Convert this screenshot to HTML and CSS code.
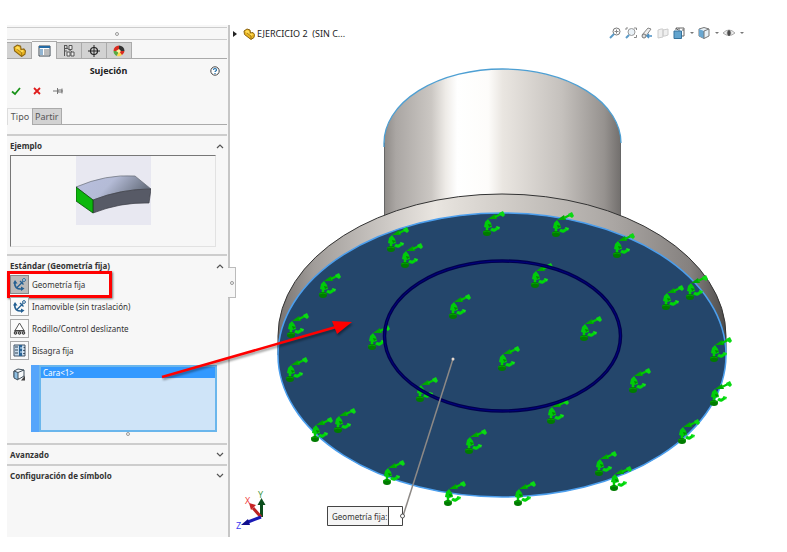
FILE: index.html
```html
<!DOCTYPE html>
<html lang="es">
<head>
  <meta charset="UTF-8">
  <meta name="viewport" content="width=device-width, initial-scale=1.0">
  <title>Sujeción</title>
  <link rel="stylesheet" href="styles.css">
</head>
<body>

<!-- shared icons -->
<svg class="defs" width="0" height="0">
  <symbol id="part" viewBox="0 0 12 12">
    <path d="M1 3 4 1l3 1 .5 3L10 4.500l1.500 2-.5 3L8 11.500 1.500 6.500z" fill="#e9b421" stroke="#8b6410"/>
    <path d="M2 3.500 4 2l2 1 .5 3L9 5.500l1 1-2 1.500-4-3z" fill="#ffdc58"/>
    <path d="M4 5l4 3v3" fill="none" stroke="#8b6410" stroke-width=".7"/>
  </symbol>
  <symbol id="anchor" viewBox="0 0 15 15">
    <path d="M3 5C2 10 5 12.500 10 12" fill="none" stroke="#235f92" stroke-width="1.600"/>
    <path d="M1 6.500 3 3l2.500 3.500zM9 9.500l3.500 2L9 14z" fill="#235f92"/>
    <path d="M4.500 11 11 4.500M8 4l3.500 3.500" stroke="#235f92" stroke-width="1.300"/>
    <circle cx="12" cy="3" r="1.400" fill="#fff" stroke="#235f92"/>
  </symbol>
  <symbol id="chev" viewBox="0 0 8 8">
    <path d="M1 6 4 3l3 3" fill="none" stroke="#555" stroke-width="1.200"/>
  </symbol>
</svg>

<div class="app">

  <aside class="panel">
    <div class="grip"><i class="dot"></i></div>

    <nav class="tabs">
      <button class="tab" aria-label="Árbol"><svg width="13" height="13"><use href="#part"/></svg></button>
      <button class="tab active" aria-label="Propiedades">
        <svg width="13" height="12" viewBox="0 0 13 12"><path d="M1 1h11v10H1z" fill="#fff" stroke="#3a4650"/><path d="M1 2h11" stroke="#256ba5" stroke-width="2"/><path d="M2 5h3M2 7h3M2 9h3" stroke="#256ba5"/><path d="M6 5h5M6 7h5M6 9h5" stroke="#777"/></svg>
      </button>
      <button class="tab" aria-label="Configuraciones">
        <svg width="12" height="13" viewBox="0 0 12 13"><path d="M1.500 1v11M1 1.500h3v3H2M4 4l5 4M2 7h2" fill="none" stroke="#555"/><path d="M6 1.500h3v4H6zM4 8h3v4H4zM8 8h3v4H8z" fill="#eee" stroke="#555"/></svg>
      </button>
      <button class="tab" aria-label="Cotas">
        <svg width="12" height="12" viewBox="0 0 12 12"><circle cx="6" cy="6" r="3.500" fill="none" stroke="#222" stroke-width="1.200"/><path d="M6 0v12M0 6h12" stroke="#222"/></svg>
      </button>
      <button class="tab" aria-label="Aspecto">
        <svg width="12" height="12" viewBox="0 0 12 12"><path d="M6 6V.5A5.500 5.500 0 0 0 .5 6z" fill="#d92c20"/><path d="M6 6V.5A5.500 5.500 0 0 1 11.500 6z" fill="#333"/><path d="M6 6H.5A5.500 5.500 0 0 0 4 11z" fill="#59a842"/><path d="M6 6 4 11a5.500 5.500 0 0 0 5-1z" fill="#ffd84a"/><path d="M6 6l3 4a5.500 5.500 0 0 0 2.500-4z" fill="#d92c20"/><path d="M3 6l3-2 2 2-2 2z" fill="#fff0a8"/></svg>
      </button>
    </nav>

    <header class="title">
      <h1>Sujeción</h1>
      <button class="help" aria-label="Ayuda">
        <svg width="10" height="10" viewBox="0 0 10 10"><circle cx="5" cy="5" r="4.200" fill="#fff" stroke="#444"/><path d="M3.500 4c0-2 3-2 3 0 0 1-1.500 1-1.500 2M5 7v1" fill="none" stroke="#1b6ba8" stroke-width="1.200"/></svg>
      </button>
    </header>

    <div class="actions">
      <button aria-label="Aceptar"><svg width="10" height="10" viewBox="0 0 10 10"><path d="M1 5.500 4 8l5-6" fill="none" stroke="#189218" stroke-width="1.800"/></svg></button>
      <button aria-label="Cancelar"><svg width="10" height="10" viewBox="0 0 10 10"><path d="M2 2l6 6M8 2 2 8" stroke="#df1d1d" stroke-width="1.800"/></svg></button>
      <button aria-label="Fijar"><svg width="10" height="10" viewBox="0 0 10 10"><path d="M0 5h4M4.500 2v6M5 4h4v2H5zM9 2.500v5" fill="none" stroke="#777"/></svg></button>
    </div>

    <div class="subtabs">
      <button class="subtab active">Tipo</button>
      <button class="subtab">Partir</button>
    </div>

    <section class="group">
      <h2><button>Ejemplo <svg width="8" height="8"><use href="#chev"/></svg></button></h2>
      <div class="preview">
        <svg width="75" height="69" viewBox="0 0 75 69">
          <defs>
            <linearGradient id="beam" x1="0" x2="1" y1="0" y2=".3"><stop offset="0" stop-color="#b9bfdf"/><stop offset=".5" stop-color="#b4bbd6"/><stop offset="1" stop-color="#697180"/></linearGradient>
          </defs>
          <path d="M0 0h75v69H0z" fill="#e8e8f1"/>
          <path d="M0 31Q30 18 59 20l16 13Q45 33 17 44z" fill="url(#beam)" stroke="#666b75" stroke-width=".7"/>
          <path d="M17 44q28-11 58-11l-2 14q-28-1-56 10z" fill="#575a66" stroke="#3d3f47" stroke-width=".7"/>
          <path d="M0 31l17 13v13L0 45z" fill="#0db80d" stroke="#064d06" stroke-width=".8"/>
        </svg>
      </div>
    </section>

    <section class="group">
      <h2><button>Estándar (Geometría fija) <svg width="8" height="8"><use href="#chev"/></svg></button></h2>
      <div class="options">
        <label class="option marked">
          <input type="radio" name="tipo" checked>
          <svg width="15" height="15"><use href="#anchor"/></svg>
          <span>Geometría fija</span>
        </label>
        <label class="option">
          <input type="radio" name="tipo">
          <svg width="15" height="15"><use href="#anchor"/></svg>
          <span>Inamovible (sin traslación)</span>
        </label>
        <label class="option">
          <input type="radio" name="tipo">
          <svg width="15" height="15" viewBox="0 0 15 15"><path d="M3 9.500 7.500 2 12 9.500z" fill="#fff" stroke="#555"/><path d="M2 10h11" stroke="#333"/><g fill="#aaa" stroke="#333"><circle cx="3.500" cy="12" r="1.300"/><circle cx="7.500" cy="12" r="1.300"/><circle cx="11.500" cy="12" r="1.300"/></g></svg>
          <span>Rodillo/Control deslizante</span>
        </label>
        <label class="option">
          <input type="radio" name="tipo">
          <svg width="15" height="15" viewBox="0 0 15 15"><path d="M2 2h11v11H2z" fill="#c9dced" stroke="#456"/><path d="M7 2h3v11H7z" fill="#2b6597"/><path d="M3 4h3M3 7h3M3 10h3" stroke="#345" stroke-width="1.200"/><path d="M12 4v1M12 7v1M12 10v1" stroke="#234" stroke-width="1.500"/><path d="M8 5h4M8 9h4" stroke="#d9ebf8"/></svg>
          <span>Bisagra fija</span>
        </label>
      </div>
      <div class="selection">
        <svg width="13" height="14" viewBox="0 0 13 14"><path d="M1 3l4-2 6 1v6l-5 3-5-2z" fill="#f5f8fa" stroke="#41505c"/><path d="M1 3l4 1.500V12L1 10z" fill="#8ebfe2" stroke="#41505c"/><path d="M5 4.500 11 2" stroke="#41505c"/><path d="M8 12.500l4-5v5z" fill="#444"/></svg>
        <span class="strip"></span>
        <select size="2" aria-label="Caras seleccionadas">
          <option class="picked">Cara&lt;1&gt;</option>
        </select>
      </div>
      <i class="dot resize"></i>
    </section>

    <section class="group">
      <h2><button>Avanzado <svg class="down" width="8" height="8"><use href="#chev"/></svg></button></h2>
    </section>
    <section class="group">
      <h2><button>Configuración de símbolo <svg class="down" width="8" height="8"><use href="#chev"/></svg></button></h2>
    </section>

    <div class="handle"><i class="dot"></i></div>
  </aside>

  <main class="view">
    <div class="topbar">
      <div class="tree">
        <svg width="4" height="6" viewBox="0 0 4 6"><path d="M0 0l4 3-4 3z" fill="#222"/></svg>
        <svg width="12" height="12"><use href="#part"/></svg>
        <span>EJERCICIO 2&nbsp; (SIN C...</span>
      </div>
      <div class="tools">
        <button aria-label="Zoom para ajustar"><svg width="12" height="12" viewBox="0 0 12 12"><circle cx="7.500" cy="4.500" r="3.500" fill="#fff" stroke="#777"/><path d="M7.500 2.500v4M5.500 4.500h4" stroke="#888"/><path d="M5 7 1 11" stroke="#5b9bc8" stroke-width="2"/></svg></button>
        <button aria-label="Zoom encuadre"><svg width="12" height="12" viewBox="0 0 12 12"><path d="M1 3V1h2M9 1h2.500v2M11.500 8v2.500H9" fill="none" stroke="#888"/><circle cx="6.500" cy="5" r="3.500" fill="#eaf2f8" stroke="#999"/><path d="M4 8 1 11" stroke="#5b9bc8" stroke-width="2"/></svg></button>
        <button aria-label="Vista previa"><svg width="12" height="12" viewBox="0 0 12 12"><path d="M1 8l6-7 3 1-5 7z" fill="#eee" stroke="#888"/><circle cx="3" cy="9" r="2" fill="#ddd" stroke="#777"/><path d="M11 9H6m2-2L6 9l2 2" fill="none" stroke="#4b8fc2" stroke-width="1.500"/></svg></button>
        <button aria-label="Sección"><svg width="12" height="12" viewBox="0 0 12 12"><path d="M1 3l3-1h2v8l-5 1zM6 3l5-1v6l-3 1H6z" fill="#efefef" stroke="#ccc"/></svg></button>
        <button class="drop" aria-label="Orientación"><svg width="12" height="12" viewBox="0 0 12 12"><path d="M3 3V1h8v8H9M6 1v3M9 3h2M3 1l2 2" fill="none" stroke="#666"/><path d="M1 4h7.500v7.500H1z" fill="#62a4ce" stroke="#36739c"/></svg></button>
        <button class="drop" aria-label="Estilo"><svg width="12" height="12" viewBox="0 0 12 12"><path d="M1 2l5-1.500L11 2v7l-5 2.500L1 9z" fill="#e8f1f7" stroke="#777"/><path d="M1 2l5 2v7.500L1 9z" fill="#69a7d1"/><path d="M6 4v7.500M6 4l5-2" stroke="#777"/></svg></button>
        <button class="drop" aria-label="Ocultar"><svg width="12" height="12" viewBox="0 0 12 12"><path d="M0 6q6-6 12 0-6 5-12 0z" fill="#eee" stroke="#aaa"/><circle cx="6" cy="6" r="2.300" fill="#777"/><path d="M6 3v6" stroke="#222"/></svg></button>
      </div>
    </div>

    <svg class="model" viewBox="230 25 557 512">
      <defs>
        <linearGradient id="boss">
          <stop offset="0" stop-color="#8e8a87"/><stop offset=".05" stop-color="#aaa6a3"/>
          <stop offset=".2" stop-color="#cbc7c3"/><stop offset=".26" stop-color="#eeebe7"/>
          <stop offset=".31" stop-color="#fff"/><stop offset=".44" stop-color="#fdfcfa"/>
          <stop offset=".5" stop-color="#eae6e1"/><stop offset=".75" stop-color="#c5c1bd"/>
          <stop offset=".93" stop-color="#96928f"/><stop offset="1" stop-color="#716e6c"/>
        </linearGradient>
        <linearGradient id="flange">
          <stop offset="0" stop-color="#777371"/><stop offset=".08" stop-color="#a19d9a"/>
          <stop offset=".25" stop-color="#cfcbc7"/><stop offset=".35" stop-color="#e9e5e0"/>
          <stop offset=".5" stop-color="#d2cec9"/><stop offset=".75" stop-color="#aaa6a3"/>
          <stop offset=".92" stop-color="#85817f"/><stop offset="1" stop-color="#4c4a49"/>
        </linearGradient>
        <!-- fixture symbol, origin on the base disc -->
        <g id="fix">
          <path d="M0-1v-6" stroke="#00d000" stroke-width="2.500"/>
          <path d="M-3-6-2-11 1-14 4-10 5-6 1-5z" fill="#00cc0a"/>
          <path d="M1-9l4 1-3 2z" fill="#008d00"/>
          <path d="M1-14 8-19 10-14z" fill="#00a800"/>
          <path d="M8-16 14-19" stroke="#00c800" stroke-width="2"/>
          <path d="M12-20l4-2 2 4-2 2-3-2z" fill="#0bd914"/>
          <path d="M4-4q4 3 7-2" fill="none" stroke="#00d60a" stroke-width="3"/>
          <path d="M9-7l4 1-1 3z" fill="#12e21b"/>
          <ellipse rx="4" ry="3" fill="#007c00"/>
          <path d="M-4-1q4-2 8 0" fill="none" stroke="#00a500"/>
        </g>
      </defs>

      <path d="M384 143a118.500 74 0 0 1 237 0v90H384z" fill="url(#boss)"/>
      <path d="M384.500 143v75M620.500 143v75" stroke="#666" stroke-width="1"/>
      <path d="M384 147v-4a118.500 74 0 0 1 237 0" fill="none" stroke="#4d9fd3" stroke-width="1.300"/>

      <path d="M278 355v-19a224 142 0 0 1 448 0v19z" fill="url(#flange)" stroke="#333"/>
      <ellipse cx="502" cy="355" rx="224" ry="142" fill="#24466b" stroke="#4c9fee" stroke-width="1.500"/>

      <use href="#fix" x="487" y="233"/>
      <use href="#fix" x="391" y="249"/>
      <use href="#fix" x="405" y="265"/>
      <use href="#fix" x="323" y="295"/>
      <use href="#fix" x="291" y="335"/>
      <use href="#fix" x="372" y="347"/>
      <use href="#fix" x="453" y="316"/>
      <use href="#fix" x="290" y="379"/>
      <use href="#fix" x="420" y="399"/>
      <use href="#fix" x="502" y="368"/>
      <use href="#fix" x="315" y="439"/>
      <use href="#fix" x="338" y="430"/>
      <use href="#fix" x="387" y="482"/>
      <use href="#fix" x="469" y="451"/>
      <use href="#fix" x="448" y="503"/>
      <use href="#fix" x="556" y="234"/>
      <use href="#fix" x="617" y="255"/>
      <use href="#fix" x="535" y="285"/>
      <use href="#fix" x="666" y="307"/>
      <use href="#fix" x="690" y="297"/>
      <use href="#fix" x="584" y="338"/>
      <use href="#fix" x="714" y="359"/>
      <use href="#fix" x="633" y="390"/>
      <use href="#fix" x="551" y="421"/>
      <use href="#fix" x="714" y="403"/>
      <use href="#fix" x="682" y="441"/>
      <use href="#fix" x="599" y="473"/>
      <use href="#fix" x="614" y="488"/>
      <use href="#fix" x="518" y="503"/>

      <!-- inner edge runs over the symbols -->
      <ellipse cx="502.500" cy="336" rx="118" ry="75" fill="none" stroke="#00004e" stroke-width="3.500"/>
      <ellipse cx="502.500" cy="336" rx="118" ry="75" fill="none" stroke="#000080"/>

      <!-- callout -->
      <path d="M453 359 403 516" stroke="#8d8986" stroke-width="1.500"/>
      <circle cx="453" cy="359" r="1.500" fill="#e8d8cc"/>
      <path d="M327.500 506.500h75v19h-75z" fill="#fff" stroke="#444"/>
      <path d="M328 507h60v18h-60z" fill="#f5f5f5"/>
      <path d="M388.500 507v18" stroke="#444"/>
      <text class="note" x="332" y="520">Geometría fija:</text>
      <circle cx="402.500" cy="516" r="2" fill="#fff" stroke="#555"/>

      <!-- axes -->
      <path d="M261.500 517v-14" stroke="#0b4d1c" stroke-width="3"/>
      <path d="M257.500 505l4-7 4 7z" fill="#0b4d1c"/>
      <path d="M261 517l-8-9" stroke="#bd2222" stroke-width="3"/>
      <path d="M249 503l7 2-5 5z" fill="#c62323"/>
      <path d="M261 517l-13 5" stroke="#1a1ab5" stroke-width="3"/>
      <path d="M241 525l7-6 2 6z" fill="#10108e"/>
      <text class="axis" x="258" y="498" fill="#4a9a4a">Y</text>
      <text class="axis" x="245" y="504" fill="#f04040">X</text>
      <text class="axis" x="236" y="529" fill="#3c3cf0">Z</text>
    </svg>
  </main>

  <svg class="arrow" width="360" height="400" viewBox="7 25 360 400">
    <path d="M162 377 336 327" stroke="#f00" stroke-width="2.500"/>
    <path d="M352 322l-20-1 5 13z" fill="#f00"/>
  </svg>
</div>

</body>
</html>
```

FILE: styles.css
```css
*,
*::after {
  margin: 0;
  padding: 0;
  box-sizing: border-box;
}
body {
  padding: 25px 0 15px 7px;
  background: #fff;
  color: #333;
  font-family: "Noto Sans", "Open Sans", sans-serif;
  font-size: 8px;
  line-height: 12px;
}
button {
  border: 0;
  background: none;
  color: inherit;
  font: inherit;
}
svg {
  display: block;
}
.defs {
  position: absolute;
}

.app {
  position: relative;
  display: grid;
  grid-template-columns: 223px 1fr;
}

/* property panel */
.panel {
  position: relative;
  padding-right: 1px;
  background: #f7f7f7;
  border-right: 2px solid #c6c6c6;
}
.dot {
  width: 4px;
  height: 4px;
  border: 1px solid #999;
  border-radius: 50%;
}
.grip {
  display: flex;
  align-items: center;
  justify-content: center;
  height: 13px;
  margin-top: 2px;
  border-top: 1px solid #ccc;
  border-bottom: 1px solid #ccc;
}
.tabs {
  display: flex;
  align-items: flex-end;
  height: 19px;
  border-bottom: 1px solid #aaa;
}
.tab {
  display: flex;
  align-items: center;
  justify-content: center;
  width: 25px;
  height: 16px;
  background: #d2d2d2;
  border: 1px solid #aaa;
  border-width: 1px 1px 0 0;
}
.tab.active {
  height: 18px;
  margin-bottom: -1px;
  background: #f7f7f7;
}

.title {
  display: flex;
  align-items: center;
  height: 24px;
  padding-right: 7px;
}
.title h1 {
  flex: 1;
  color: #222;
  font-size: 9px;
  text-align: center;
}
.actions {
  display: flex;
  gap: 11px;
  padding: 3px 4px 12px;
}
.subtabs {
  display: flex;
  height: 17px;
  margin-bottom: 9px;
  border-bottom: 1px solid #aaa;
}
.subtab {
  height: 16px;
  padding: 0 2px;
  background: #d2d2d2;
  border: 1px solid #aaa;
  border-bottom: 0;
  color: #555;
  font-size: 9px;
}
.subtab.active {
  width: 25px;
  height: 17px;
  background: #f7f7f7;
  border-color: #ddd;
  border-right: 0;
}

.group {
  border-top: 2px solid #cdcdcd;
}
.group h2 {
  font-size: 8px;
}
.group h2 button {
  display: flex;
  align-items: center;
  justify-content: space-between;
  width: 100%;
  height: 19px;
  padding: 0 3px;
}
.down {
  transform: rotate(180deg);
}
.preview {
  display: flex;
  justify-content: center;
  height: 92px;
  margin: 0 11px 7px 3px;
  border: 1px solid #e2e2e2;
  border-top-color: #777;
  border-left-color: #777;
}

.options {
  display: grid;
  gap: 3px;
  padding: 0 3px;
}
.option {
  position: relative;
  display: grid;
  grid-template-columns: 19px 1fr;
  gap: 3px;
  align-items: center;
  color: #333;
}
.option input {
  grid-area: 1 / 1;
  width: 19px;
  height: 19px;
  appearance: none;
  background: #fafafa;
  border: 1px solid #aaa;
}
.option input:checked {
  background: #b9b9b9;
  border-color: #888;
}
.option svg {
  grid-area: 1 / 1;
  justify-self: center;
  pointer-events: none;
}
.marked::after {
  content: "";
  position: absolute;
  inset: -4px auto -4px -3px;
  width: 105px;
  border: 3px solid #f00;
  box-shadow: 1px 1px 2px #0008;
}

.selection {
  display: flex;
  align-items: flex-start;
  height: 67px;
  margin-top: 5px;
  padding: 0 10px 0 6px;
}
.selection svg {
  margin: 3px 5px 0 0;
}
.strip {
  align-self: stretch;
  width: 8px;
  background: #55a5fb;
}
.selection select {
  flex: 1;
  align-self: stretch;
  overflow: hidden;
  appearance: none;
  background: #cfe4f8;
  border: 2px solid #6ab6ec;
  border-radius: 0;
  outline: 0;
  font: inherit;
}
.picked {
  min-height: 0;
  padding: 0 2px;
  background: #39f;
  color: #fff;
  font-size: 8px;
  line-height: 13px;
}
.resize {
  display: block;
  margin: 0 auto 7px 119px;
}
.handle {
  position: absolute;
  top: 242px;
  right: -8px;
  display: flex;
  align-items: center;
  justify-content: center;
  width: 8px;
  height: 31px;
  background: #f7f7f7;
  border: 1px solid #bbb;
  border-left: 0;
}

/* graphics area */
.view {
  display: grid;
}
.topbar,
.model {
  grid-area: 1 / 1;
}
.topbar {
  z-index: 1;
  display: flex;
  align-items: flex-start;
  justify-content: space-between;
  padding: 2px 43px 0 3px;
}
.tree {
  display: flex;
  align-items: center;
  gap: 2px;
  padding-top: 1px;
  color: #222;
  font-size: 9px;
}
.tree svg:first-child {
  margin-right: 4px;
}
.tools {
  display: flex;
  gap: 4px;
}
.drop {
  display: flex;
  align-items: center;
  gap: 5px;
}
.drop::after {
  content: "";
  border: 2px solid transparent;
  border-top-color: #777;
  border-bottom: 0;
}
.model {
  width: 100%;
}
.note {
  fill: #333;
  font-size: 8px;
}
.axis {
  font-size: 9px;
}

/* callout arrow from the list to the face */
.arrow {
  position: absolute;
  top: 0;
  left: 0;
  z-index: 2;
  pointer-events: none;
  filter: drop-shadow(1px 2px 1px #0006);
}
```
